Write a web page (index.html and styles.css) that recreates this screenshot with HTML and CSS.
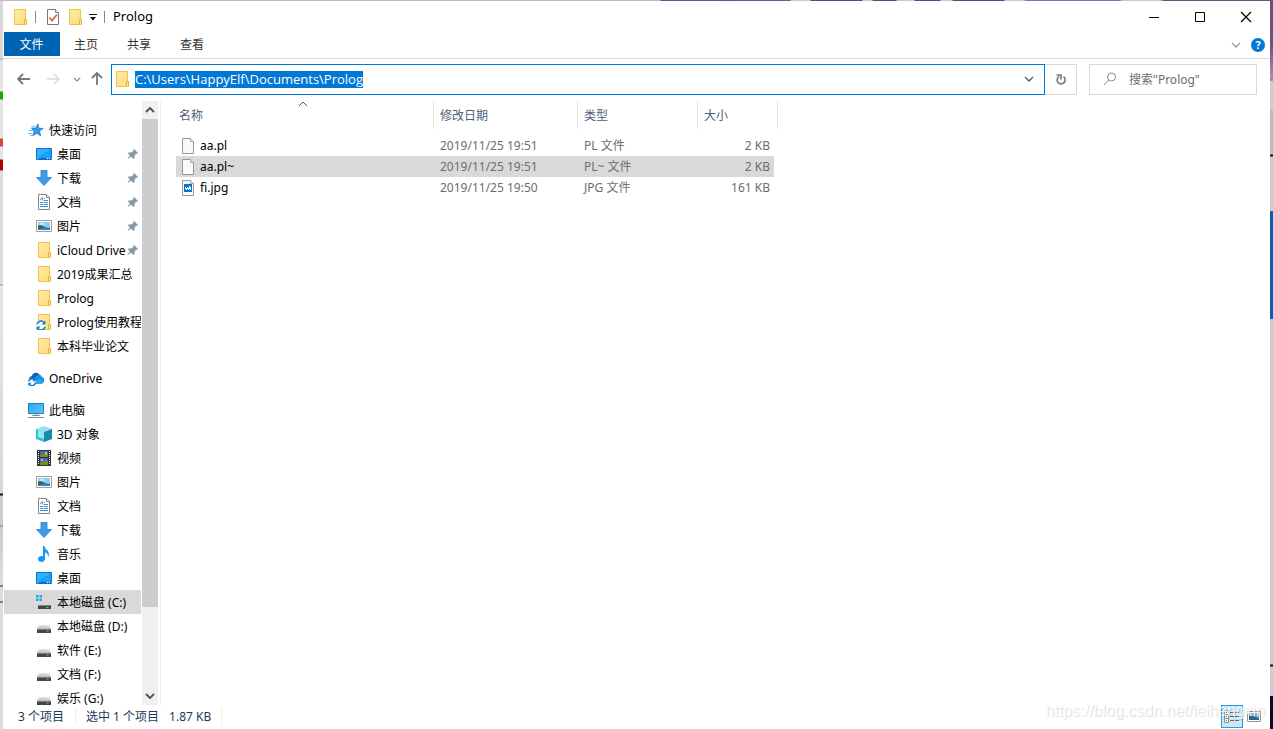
FILE: index.html
```html
<!DOCTYPE html>
<html lang="zh-CN">
<head>
<meta charset="utf-8">
<title>Prolog</title>
<link rel="stylesheet" href="styles.css">
</head>
<body>
<svg class="sprite" aria-hidden="true">
  <defs>
    <linearGradient id="g-folder" x1="0" y1="0" x2="1" y2="1"><stop offset="0" stop-color="#ffeaa6"/><stop offset="1" stop-color="#ffdc7a"/></linearGradient>
    <linearGradient id="g-drive" x1="0" y1="0" x2="0" y2="1"><stop offset="0" stop-color="#e4e5e7"/><stop offset="1" stop-color="#b9bcc0"/></linearGradient>
    <linearGradient id="g-screen" x1="0" y1="0" x2="1" y2="1"><stop offset="0" stop-color="#2ea3f2"/><stop offset="1" stop-color="#5cc8fa"/></linearGradient>
    <symbol id="folder" viewBox="0 0 16 16"><path d="M2.500.5h11v10h1v5h-12z" fill="url(#g-folder)" stroke="#edc54d"/><path d="M12.500 15V10.500h2v5" fill="#ffe48f" stroke="#e5b83a"/></symbol>
    <symbol id="star" viewBox="0 0 16 16"><path d="M10 2l.8 4.200 4.400.3-3.700 2.500 1.200 5-3.800-2.800-4.300 2.600 1.600-4.600L3.500 6.200l4.200-.1z" fill="#2b9de8" stroke="#1275bd" stroke-width=".7"/><path d="M3 4.500h4M1 8.500h4M0 11.500h4M2 13.500h2" stroke="#72bdf0"/></symbol>
    <symbol id="desktop" viewBox="0 0 16 16"><path d="M.5 2.500h15v11H.5z" fill="#1aa0fb" stroke="#0876cc"/><path d="M1 12L14 3H1z" fill="#31b0ff"/><path d="M1 12.500h14" stroke="#0a6fc0"/><path d="M1.500 12.500h1M11 12.500h1M13 12.500h1" stroke="#fff"/></symbol>
    <symbol id="download" viewBox="0 0 16 16"><path d="M5 .5h6v7h4.500L8 15.500.5 7.500H5z" fill="#439be8" stroke="#2b78c4" stroke-width=".8"/></symbol>
    <symbol id="document" viewBox="0 0 16 16"><path d="M2.500.5h8l3 3v12h-11z" fill="#fff" stroke="#858585"/><path d="M10.500.5v3h3" fill="#ddd" stroke="#888"/><path d="M4 6.500l2-3 1 3M8 4.500h1M8 6.500h4M4 8.500h3M8 8.500h4M4 10.500h3M8 10.500h4M4 12.500h8" fill="none" stroke="#3a93cd"/></symbol>
    <symbol id="picture" viewBox="0 0 16 16"><path d="M.5 2.500h15v11H.5z" fill="#fff" stroke="#9a9fa4"/><path d="M2 4h12v8H2z" fill="#8ecdf3"/><path d="M2 7.500q3-1 6 1t6 1v2.500H2z" fill="#2f6269"/><path d="M2 11q6-2 12-1v2H2z" fill="#397fb8"/><path d="M3 6.500q3-3 6 0" fill="#eff9ff"/></symbol>
    <symbol id="sync" viewBox="0 0 16 16"><use href="#folder"/><circle cx="5" cy="11.500" r="4.500" fill="#fff"/><path d="M1 10.500a4 4 0 0 1 7-2M9 12.500a4 4 0 0 1-7 2" fill="none" stroke="#0878d1" stroke-width="1.500"/><path d="M9.500 6.500V10.500H5.500zM.5 16.500V12.500h4z" fill="#0878d1"/></symbol>
    <symbol id="cloud" viewBox="0 0 16 16"><path d="M1 9.500A3.500 3.500 0 0 1 4 6a4.200 4.200 0 0 1 8-.5L8 10z" fill="#0a62b8"/><path d="M7 7l4-2.500A3.300 3.300 0 0 1 13.800 7a3.300 3.300 0 0 1 1 6H6z" fill="#1a8ee6"/><path d="M6 13l5-4.500 4.500 3A2.500 2.500 0 0 1 13.500 14H6z" fill="#28a8ea"/><circle cx="4" cy="12" r="3.800" fill="#fff"/><path d="M.8 11.500a3 3 0 0 1 5.500-1.500M7.200 12.500a3 3 0 0 1-5.500 1.800" fill="none" stroke="#0878d1" stroke-width="1.500"/><path d="M7.500 8v3.200H4.300zM.3 16v-3.200h3.200z" fill="#0878d1"/></symbol>
    <symbol id="computer" viewBox="0 0 16 16"><path d="M.5 1.500h15v10H.5z" fill="url(#g-screen)" stroke="#2680b5"/><path d="M6 12h4v1H6z" fill="#c8d2d9"/><path d="M4 13.500h8M0 15.500h16" stroke="#7892a4"/></symbol>
    <symbol id="cube" viewBox="0 0 16 16"><path d="M0 3l8-3 8 3-8 3z" fill="#9fdfe9"/><path d="M0 3l8 3v10l-8-3z" fill="#35bdd2"/><path d="M16 3L8 6v10l8-3z" fill="#128ca8"/><path d="M2 4l6 2v7L2 11z" fill="#8eeaf3"/></symbol>
    <symbol id="video" viewBox="0 0 16 16"><path d="M1 0h14v16H1z" fill="#303236"/><path d="M4 1h8v6H4zM4 8h8v7H4z" fill="#2f6fc0"/><path d="M4 5l3-1 2 1 3-1v3H4zM4 13l4-2 4 1v3H4z" fill="#6f8a35"/><path d="M9 2h2v3H9zM5 9h2v2H5z" fill="#e3b62b"/><path d="M6 3h2v2H6zM9 10h2v2H9z" fill="#d35546"/><path d="M2.500 1v14M13.500 1v14" stroke="#fff" stroke-dasharray="1 1"/></symbol>
    <symbol id="music" viewBox="0 0 16 16"><path d="M7 0h1.500q.5 3 3 4.500 2.500 2.500.500 7 .5-4-3-5v6.500A3.500 3 0 1 1 7 10.200z" fill="#159af2"/></symbol>
    <symbol id="drive" viewBox="0 0 16 16"><path d="M3 7h10l2 4H1z" fill="url(#g-drive)"/><path d="M1 11h14v4H1z" fill="#42464b"/><path d="M1 11.500h14" stroke="#777"/><path d="M10.500 12.500h2v1h-2z" fill="#46e957"/></symbol>
    <symbol id="sysdrive" viewBox="0 0 16 16"><path d="M4 9h9l2 3H2z" fill="url(#g-drive)"/><path d="M2 11.500h13V15H2z" fill="#42464b"/><path d="M10.500 13h2v1h-2z" fill="#46e957"/><path d="M0 1h2.500v2.500H0zM3.500 1H6v2.500H3.500zM0 4.500h2.500V7H0zM3.500 4.500H6V7H3.500z" fill="#10aee8"/></symbol>
    <symbol id="pin" viewBox="0 0 12 12"><path d="M7 1l4 4-1 1-1-.5L7.500 8l0 2.500-1 .5L4 8.500 1 11l-.5-.5L3 7.500 1 5.500 1.500 4.500H4L6.500 3 6 2z" fill="#8497a3"/></symbol>
    <symbol id="file" viewBox="0 0 16 16"><path d="M2.500.5h8l3 3v12h-11z" fill="#fafafa" stroke="#979797"/><path d="M10.500.5v3h3" fill="#eee" stroke="#a8a8a8"/></symbol>
    <symbol id="jpg" viewBox="0 0 16 16"><use href="#file"/><path d="M4 4h8v8H4z" fill="#0876d1"/><path d="M5 7h1v1h1V7h1v1h1V6h1v1h1v3h-1V9H9v1H8V9H7v1H6V9H5z" fill="#fff"/></symbol>
    <symbol id="chevron" viewBox="0 0 10 6"><path d="M1 1l4 4 4-4" fill="none" stroke="currentColor" stroke-width="1.300"/></symbol>
    <symbol id="arrow" viewBox="0 0 14 12"><path d="M6 1L1 6l5 5M1 6h12" fill="none" stroke="currentColor" stroke-width="1.800"/></symbol>
  </defs>
</svg>
<div class="edge-top"></div>
<div class="desk">
<div class="edge-left"></div>
<div class="window">
  <header class="titlebar">
    <svg class="icon"><use href="#folder"/></svg>
    <span class="rule"></span>
    <button class="plain props" aria-label="属性"><svg class="icon" viewBox="0 0 16 16"><path d="M2.500.5h8l3 3v12h-11z" fill="#fff" stroke="#777"/><path d="M10.500.5v3h3" fill="#eee" stroke="#888"/><path d="M4.500 8.500l2.500 3 5-6" fill="none" stroke="#ec6431" stroke-width="1.800"/></svg></button>
    <button class="plain" aria-label="新建文件夹"><svg class="icon"><use href="#folder"/></svg></button>
    <button class="plain more" aria-label="自定义"><svg width="8" height="8" viewBox="0 0 8 8"><path d="M0 1.500h8" stroke="#111"/><path d="M1 4h6L4 7.500z" fill="#111"/></svg></button>
    <span class="rule"></span>
    <h1 class="title">Prolog</h1>
    <div class="controls">
      <button class="plain" aria-label="最小化"><svg width="12" height="12" viewBox="0 0 12 12"><path d="M1 6.500h10" stroke="#000"/></svg></button>
      <button class="plain" aria-label="最大化"><svg width="12" height="12" viewBox="0 0 12 12"><path d="M1.500 1.500h9v9h-9z" fill="none" stroke="#000"/></svg></button>
      <button class="plain" aria-label="关闭"><svg width="12" height="12" viewBox="0 0 12 12"><path d="M1 1l10 10M11 1L1 11" stroke="#000" stroke-width="1.200"/></svg></button>
    </div>
  </header>
  <div class="tabs">
    <button class="tab tab-file">文件</button>
    <button class="tab">主页</button>
    <button class="tab">共享</button>
    <button class="tab">查看</button>
    <div class="help">
      <button class="plain faint" aria-label="展开功能区"><svg width="10" height="6"><use href="#chevron"/></svg></button>
      <button class="plain help-mark" aria-label="帮助">?</button>
    </div>
  </div>
  <div class="navbar">
    <button class="plain go" aria-label="后退"><svg width="14" height="12"><use href="#arrow"/></svg></button>
    <button class="plain go off" aria-label="前进"><svg width="14" height="12" viewBox="0 0 14 12"><path d="M8 1l5 5-5 5M13 6H1" fill="none" stroke="currentColor" stroke-width="1.500"/></svg></button>
    <button class="plain recent" aria-label="最近"><svg width="8" height="5"><use href="#chevron"/></svg></button>
    <button class="plain up" aria-label="上移"><svg width="12" height="14" viewBox="0 0 12 14"><path d="M1 6l5-5 5 5M6 1v12" fill="none" stroke="currentColor" stroke-width="1.800"/></svg></button>
    <div class="address">
      <svg class="icon"><use href="#folder"/></svg>
      <input id="path" class="path" type="text" aria-label="地址" spellcheck="false" value="C:\Users\HappyElf\Documents\Prolog">
      <button class="plain drop" aria-label="历史"><svg width="10" height="6"><use href="#chevron"/></svg></button>
    </div>
    <button class="refresh" aria-label="刷新"><svg width="12" height="13" viewBox="0 0 12 13"><path d="M4 3.500a4 4 0 1 0 4.500.200" fill="none" stroke="#777" stroke-width="1.600"/><path d="M1.500 2H6v4.500" fill="none" stroke="#777" stroke-width="1.600"/></svg></button>
    <label class="search">
      <svg width="14" height="14" viewBox="0 0 14 14"><circle cx="8.500" cy="5" r="4" fill="none" stroke="#8a8a8a"/><path d="M5.500 8L1 13" stroke="#8a8a8a"/></svg>
      <input class="query" type="text" aria-label="搜索" placeholder='搜索"Prolog"'>
    </label>
  </div>
  <div class="main">
    <nav class="tree">
      <ul class="list">
        <li><a class="node root" href="#"><svg class="icon"><use href="#star"/></svg><span class="name">快速访问</span></a></li>
        <li><a class="node" href="#"><svg class="icon"><use href="#desktop"/></svg><span class="name">桌面</span><svg class="pin"><use href="#pin"/></svg></a></li>
        <li><a class="node" href="#"><svg class="icon"><use href="#download"/></svg><span class="name">下载</span><svg class="pin"><use href="#pin"/></svg></a></li>
        <li><a class="node" href="#"><svg class="icon"><use href="#document"/></svg><span class="name">文档</span><svg class="pin"><use href="#pin"/></svg></a></li>
        <li><a class="node" href="#"><svg class="icon"><use href="#picture"/></svg><span class="name">图片</span><svg class="pin"><use href="#pin"/></svg></a></li>
        <li><a class="node" href="#"><svg class="icon"><use href="#folder"/></svg><span class="name">iCloud Drive</span><svg class="pin"><use href="#pin"/></svg></a></li>
        <li><a class="node" href="#"><svg class="icon"><use href="#folder"/></svg><span class="name">2019成果汇总</span></a></li>
        <li><a class="node" href="#"><svg class="icon"><use href="#folder"/></svg><span class="name">Prolog</span></a></li>
        <li><a class="node" href="#"><svg class="icon"><use href="#sync"/></svg><span class="name">Prolog使用教程</span></a></li>
        <li><a class="node" href="#"><svg class="icon"><use href="#folder"/></svg><span class="name">本科毕业论文</span></a></li>
      </ul>
      <ul class="list">
        <li><a class="node root" href="#"><svg class="icon"><use href="#cloud"/></svg><span class="name">OneDrive</span></a></li>
      </ul>
      <ul class="list">
        <li><a class="node root" href="#"><svg class="icon"><use href="#computer"/></svg><span class="name">此电脑</span></a></li>
        <li><a class="node" href="#"><svg class="icon"><use href="#cube"/></svg><span class="name">3D 对象</span></a></li>
        <li><a class="node" href="#"><svg class="icon"><use href="#video"/></svg><span class="name">视频</span></a></li>
        <li><a class="node" href="#"><svg class="icon"><use href="#picture"/></svg><span class="name">图片</span></a></li>
        <li><a class="node" href="#"><svg class="icon"><use href="#document"/></svg><span class="name">文档</span></a></li>
        <li><a class="node" href="#"><svg class="icon"><use href="#download"/></svg><span class="name">下载</span></a></li>
        <li><a class="node" href="#"><svg class="icon"><use href="#music"/></svg><span class="name">音乐</span></a></li>
        <li><a class="node" href="#"><svg class="icon"><use href="#desktop"/></svg><span class="name">桌面</span></a></li>
        <li><a class="node current" href="#"><svg class="icon"><use href="#sysdrive"/></svg><span class="name">本地磁盘 (C:)</span></a></li>
        <li><a class="node" href="#"><svg class="icon"><use href="#drive"/></svg><span class="name">本地磁盘 (D:)</span></a></li>
        <li><a class="node" href="#"><svg class="icon"><use href="#drive"/></svg><span class="name">软件 (E:)</span></a></li>
        <li><a class="node" href="#"><svg class="icon"><use href="#drive"/></svg><span class="name">文档 (F:)</span></a></li>
        <li><a class="node" href="#"><svg class="icon"><use href="#drive"/></svg><span class="name">娱乐 (G:)</span></a></li>
      </ul>
    </nav>
    <div class="scroll">
      <button class="plain step" aria-label="向上滚动"><svg width="10" height="6" viewBox="0 0 10 6"><path d="M1 5l4-4 4 4" fill="none" stroke="#505050" stroke-width="1.800"/></svg></button>
      <div class="track"><div class="thumb"></div></div>
      <button class="plain step" aria-label="向下滚动"><svg width="10" height="6" viewBox="0 0 10 6"><path d="M1 1l4 4 4-4" fill="none" stroke="#505050" stroke-width="1.800"/></svg></button>
    </div>
    <main class="pane">
      <table class="files">
        <thead>
          <tr><th class="c-name">名称<svg class="sort" viewBox="0 0 10 6"><path d="M1 5l4-4 4 4" fill="none" stroke="#555"/></svg></th><th class="c-date">修改日期</th><th class="c-type">类型</th><th class="c-size">大小</th></tr>
        </thead>
        <tbody>
          <tr><td><div class="file"><svg class="icon"><use href="#file"/></svg>aa.pl</div></td><td>2019/11/25 19:51</td><td>PL 文件</td><td>2 KB</td></tr>
          <tr class="picked"><td><div class="file"><svg class="icon"><use href="#file"/></svg>aa.pl~</div></td><td>2019/11/25 19:51</td><td>PL~ 文件</td><td>2 KB</td></tr>
          <tr><td><div class="file"><svg class="icon"><use href="#jpg"/></svg>fi.jpg</div></td><td>2019/11/25 19:50</td><td>JPG 文件</td><td>161 KB</td></tr>
        </tbody>
      </table>
    </main>
  </div>
  <footer class="status">
    <span class="count">3 个项目</span>
    <span class="chosen"><span>选中 1 个项目</span><span>1.87 KB</span></span>
    <div class="views">
      <button class="plain view on" aria-label="详细信息"><svg width="16" height="14" viewBox="0 0 16 14"><path d="M.5.5h4v12h-4zM.5 4.500h4M.5 8.500h4" fill="#fff" stroke="#888"/><path d="M2 2.500h1M2 6.500h1" stroke="#3b7ccd"/><path d="M2 10.500h1" stroke="#d33"/><path d="M6 2.500h4M11 2.500h4M6 6.500h4M11 6.500h4M6 10.500h4M11 10.500h4" stroke="#666"/></svg></button>
      <button class="plain view" aria-label="大图标"><svg width="14" height="12" viewBox="0 0 14 12"><path d="M.5.5h13v10H.5z" fill="#fff" stroke="#999"/><path d="M2 2h10v7H2z" fill="#79afe8"/><path d="M2 5q4 0 10 2v2H2z" fill="#2f6269"/><path d="M7 7h5v2H7z" fill="#315f9b"/></svg></button>
    </div>
  </footer>
  <div class="watermark">https://blog.csdn.net/leihengxin</div>
</div>
<div class="edge-right"></div>
</div>
<script src="main.js"></script>
</body>
</html>
```

FILE: styles.css
```css
* { box-sizing: border-box; }
body {
  margin: 0;
  height: 100vh;
  display: flex;
  flex-direction: column;
  overflow: hidden;
  font-family: "Noto Sans", "Noto Sans CJK SC", sans-serif;
  font-size: 12px;
  line-height: 17px;
  color: #000;
}
button, input { font: inherit; color: inherit; }
.sprite { position: absolute; width: 0; height: 0; }
.icon { width: 16px; height: 16px; flex: none; display: block; }
.plain {
  border: 0;
  padding: 0;
  background: none;
  display: flex;
  align-items: center;
  justify-content: center;
}

/* Desktop showing round the window */
.edge-top { height: 1px; flex: none; background: linear-gradient(90deg, #bbb 660px, #4c5c92 661px, #52659c 790px, #c9c9cd 791px, #c9c9cd 810px, #504c85 811px, #504c85 862px, #c9c9cd 863px, #c9c9cd 872px, #504c85 873px, #504c85 896px, #c9c9cd 897px, #c9c9cd 914px, #504c85 915px, #504c85 940px, #c9c9cd 941px, #c9c9cd 952px, #504c85 953px, #504c85 1004px, #c9c9cd 1005px, #c9c9cd 1024px, #7a73a8 1026px, #7a73a8 1120px, #c9c9cd 1122px, #c9c9cd 1160px, #65527c 1164px); }
.desk { flex: 1; min-height: 0; display: flex; }
.edge-left, .edge-right { width: 3px; flex: none; }
.edge-left {
  background: linear-gradient(#d8d8d8 57px, #bbb 58px, #e5e5e5 60px, #e5e5e5 90px, #1da800 91px, #1da800 98px, #e5e5e5 99px, #e5e5e5 137px, #e04040 138px, #e04040 145px, #e5e5e5 146px, #e5e5e5 158px, #b00000 159px, #b00000 169px, #ddd 170px, #ddd 283px, #999 284px, #e5e5e5 285px, #d8d8d8 492px, #111 493px, #111 494px, #ccc 495px, #ccc 524px, #777 525px, #ccc 526px, #ddd 584px, #222 585px, #ddd 586px, #ddd 600px, #222 601px, #ddd 602px);
}
.edge-right {
  background: linear-gradient(#65527c, #6b5388 45px, #b391b5 78px, #666 79px, #ccc 80px, #ccc 108px, #bbb 109px, #bbb 153px, #111 154px, #111 155px, #ccc 156px, #ccc 210px, #0860ae 210px, #0860ae 318px, #ccc 318px, #ccc 663px, #111 664px, #111 665px, #ccc 666px, #ccc 695px, #0b0b25 695px);
}
.window {
  position: relative;
  flex: 1;
  min-width: 0;
  display: flex;
  flex-direction: column;
  background: #fff;
}

.titlebar { display: flex; align-items: center; height: 31px; padding: 0 1px 0 9px; flex: none; }
.rule { width: 1px; height: 12px; margin: 0 7px; background: #8a8a8a; }
.props { margin: 0 6px 0 2px; }
.more { margin: 0 0 0 6px; }
.title { margin: 0 0 0 1px; font-size: 13px; font-weight: 400; }
.controls { display: flex; margin-left: auto; }
.controls .plain { width: 46px; height: 30px; }

.tabs { display: flex; height: 27px; padding-left: 1px; border-bottom: 1px solid #dcdcdc; flex: none; }
.tab { width: 53px; height: 24px; padding: 0 1px 0 0; border: 0; background: none; color: #333; }
.tab-file { width: 56px; background: #0063b1; color: #fff; }
.help { display: flex; align-items: center; gap: 10px; margin-left: auto; padding-right: 5px; }
.faint { color: #999; }
.help-mark { width: 14px; height: 14px; border-radius: 50%; background: #0078d7; color: #fff; font-size: 11px; font-weight: 700; line-height: 14px; }

.navbar { display: flex; align-items: center; height: 42px; padding: 0 13px 2px 14px; flex: none; color: #777; }
.go { width: 14px; margin-right: 15px; }
.off { color: #d9d9d9; margin-right: 13px; }
.recent { width: 8px; margin-right: 10px; }
.up { width: 12px; margin-right: 8px; }
.address { flex: 1; display: flex; align-items: center; height: 31px; padding: 0 10px 0 2px; border: 1px solid #0078d7; }
.path { flex: 1; min-width: 0; height: 17px; margin-left: 5px; padding: 0; border: 0; outline: 0; color: #000; font-family: "Open Sans", "Noto Sans CJK SC", sans-serif; font-size: 13px; }
.path::selection { background: #0078d7; color: #fff; }
.drop { color: #555; }
.refresh { width: 32px; height: 31px; border: 1px solid #d9d9d9; border-left: 0; padding: 0; background: #fff; display: flex; align-items: center; justify-content: center; }
.search { width: 168px; height: 31px; margin-left: 12px; padding-left: 13px; border: 1px solid #d9d9d9; display: flex; align-items: center; gap: 12px; }
.query { width: 110px; padding: 0; border: 0; outline: 0; }
.query::placeholder { color: #6d6d6d; }

.main { flex: 1; min-height: 0; display: flex; }
.tree { width: 139px; padding-top: 17px; overflow: hidden; flex: none; }
.list { margin: 0 0 8px; padding: 0; list-style: none; }
.node { display: flex; align-items: center; height: 24px; margin: 0 1px; padding-left: 32px; color: #000; text-decoration: none; }
.root { padding-left: 24px; }
.current { background: #d9d9d9; }
.name { flex: 1; min-width: 0; margin-left: 5px; white-space: nowrap; overflow: hidden; }
.pin { width: 12px; height: 12px; margin-right: 2px; flex: none; }
.scroll { width: 16px; display: flex; flex-direction: column; background: #f0f0f0; flex: none; }
.step { height: 18px; }
.track { flex: 1; }
.thumb { height: 86%; background: #cdcdcd; }
.pane { flex: 1; min-width: 0; margin-left: 2px; padding-left: 15px; border-left: 1px solid #f0f0f0; }

.files { border-collapse: separate; border-spacing: 0; table-layout: fixed; width: 602px; }
.files th { position: relative; height: 28px; padding: 0 0 0 6px; border-right: 1px solid #e5e5e5; font-weight: 400; text-align: left; color: #4c607a; }
.files .c-name { width: 258px; padding-left: 3px; }
.c-date { width: 144px; }
.c-type { width: 120px; }
.c-size { width: 80px; }
.sort { position: absolute; top: 0; left: 122px; width: 10px; height: 6px; }
.files tbody::before { content: ""; display: block; height: 6px; }
.files td { height: 21px; padding: 0 0 0 6px; color: #6d6d6d; white-space: nowrap; }
.files td:first-child { padding-left: 4px; color: #000; }
.files td:last-child { padding-right: 4px; border-right: 4px solid transparent; background-clip: padding-box; text-align: right; }
.picked td { background-color: #d9d9d9; }
.file { display: flex; align-items: center; gap: 4px; }

.status { display: flex; align-items: center; height: 24px; padding: 0 5px 1px 15px; flex: none; color: #1e395b; }
.count { padding-right: 11px; border-right: 1px solid #eee; }
.chosen { display: flex; gap: 10px; padding: 0 10px; border-right: 1px solid #eee; }
.views { display: flex; margin-left: auto; }
.view { width: 22px; height: 23px; }
.on { border: 1px solid #26a0da; background: #cce8f7; }
.watermark { position: absolute; right: 5px; bottom: 8px; font: 16px/20px "Liberation Sans", sans-serif; color: rgba(255, 255, 255, .8); text-shadow: 1px 1px 1px rgba(0, 0, 0, .15); pointer-events: none; }
```

FILE: main.js
```js
const path = document.getElementById("path");
path.focus();
path.select();
```
